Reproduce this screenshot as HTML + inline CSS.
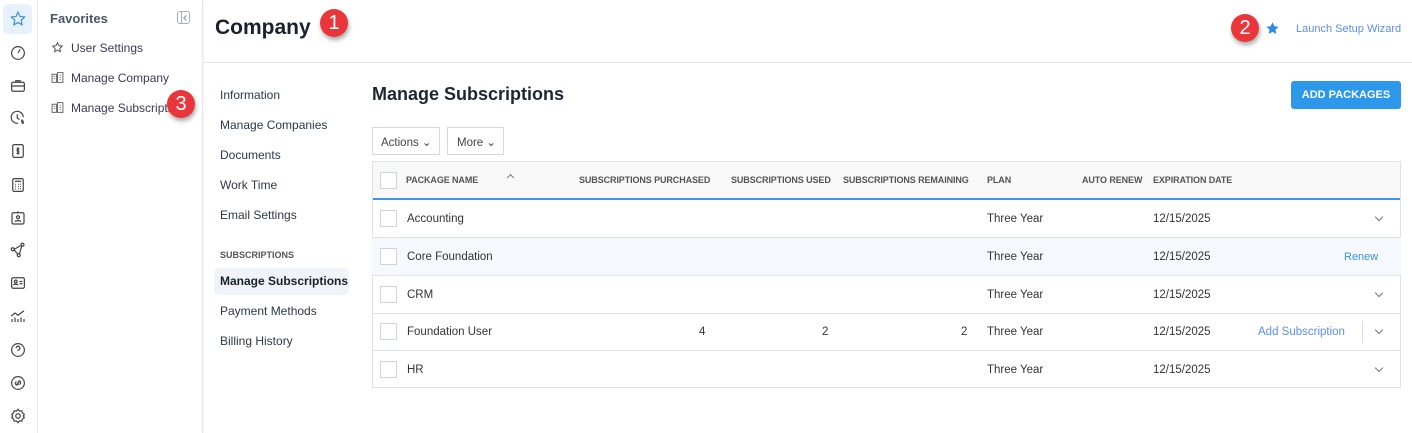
<!DOCTYPE html>
<html><head><meta charset="utf-8"><style>
*{box-sizing:border-box;margin:0;padding:0}
body{width:1412px;height:433px;overflow:hidden;background:#fff;font-family:"Liberation Sans",sans-serif;color:#2d3748;position:relative;font-size:12px}
.abs{position:absolute}
.rail{left:0;top:0;width:38px;height:433px;border-right:1px solid #e5e8ee;background:#fff}
.ic{position:absolute;left:9px;width:18px;height:18px}
.fav{left:38px;top:0;width:165px;height:433px;border-right:1px solid #e3e6eb;box-shadow:1px 0 3px rgba(0,0,0,.05)}
.badge{position:absolute;width:28px;height:28px;border-radius:50%;background:#e8363b;color:#fff;font-size:20px;text-align:center;line-height:28px;box-shadow:1px 3px 5px rgba(0,0,0,.35)}
.nav{position:absolute;left:220px;font-size:12px;color:#2d3748}
.th{position:absolute;top:175px;font-size:9px;font-weight:bold;color:#555;letter-spacing:-.1px}
.cb{position:absolute;left:380px;width:17px;height:17px;border:1px solid #cfd4da;background:#fff}
.row{position:absolute;left:372px;width:1029px;height:38px;border-bottom:1px solid #dfe2e6;font-size:11.5px;color:#333}
.row span{position:absolute;top:13px}
.chev{position:absolute;left:1004px;top:14px;width:6px;height:6px;border-right:1px solid #777;border-bottom:1px solid #777;transform:rotate(45deg)}
</style></head><body>
<div class="abs rail">
 <div class="abs" style="left:3px;top:4px;width:29px;height:30px;background:#e6f1fb;border-radius:5px"></div>
 <svg class="ic" style="top:10px" viewBox="0 0 24 24" fill="none" stroke="#3a8fd8" stroke-width="1.6"><path d="M12 3l2.7 5.6 6.1.8-4.5 4.2 1.1 6.1L12 16.8 6.6 19.7l1.1-6.1L3.2 9.4l6.1-.8z"/></svg>
 <svg class="ic" style="top:44px" viewBox="0 0 24 24" fill="none" stroke="#444" stroke-width="1.6"><circle cx="12" cy="12" r="8.5"/><path d="M12 12l3-5M8 9h.1M16 14h.1"/></svg>
 <svg class="ic" style="top:77px" viewBox="0 0 24 24" fill="none" stroke="#444" stroke-width="1.6"><rect x="3.5" y="7" width="17" height="12" rx="2"/><path d="M9 7V5h6v2M3.5 12h17"/></svg>
 <svg class="ic" style="top:109px" viewBox="0 0 24 24" fill="none" stroke="#444" stroke-width="1.6"><path d="M19 11a8 8 0 1 0-7 8"/><path d="M11 7v5l3 2M19 15h-2v2h2v2h-2"/></svg>
 <svg class="ic" style="top:142px" viewBox="0 0 24 24" fill="none" stroke="#444" stroke-width="1.6"><rect x="5" y="3.5" width="14" height="17" rx="2"/><path d="M14 9h-3v3h2v3h-3M12 7v10"/></svg>
 <svg class="ic" style="top:176px" viewBox="0 0 24 24" fill="none" stroke="#444" stroke-width="1.6"><rect x="5" y="3.5" width="14" height="17" rx="2"/><path d="M8 7h8M8 11h1M12 11h1M15 11h1M8 14h1M12 14h1M15 14h1M8 17h1M12 17h1M15 17h1"/></svg>
 <svg class="ic" style="top:209px" viewBox="0 0 24 24" fill="none" stroke="#444" stroke-width="1.6"><rect x="4" y="5" width="16" height="15" rx="2"/><circle cx="12" cy="11" r="2"/><path d="M8 17c1-2 7-2 8 0M12 3v2"/></svg>
 <svg class="ic" style="top:241px" viewBox="0 0 24 24" fill="none" stroke="#444" stroke-width="1.6"><circle cx="5" cy="11" r="2"/><circle cx="18" cy="5" r="2"/><circle cx="13" cy="19" r="2"/><path d="M7 11l9-5M7 12l5 6M17 7l-3 10"/></svg>
 <svg class="ic" style="top:274px" viewBox="0 0 24 24" fill="none" stroke="#444" stroke-width="1.6"><rect x="3.5" y="5" width="17" height="14" rx="2"/><circle cx="9" cy="10" r="1.8"/><path d="M6 15c1-2 5-2 6 0M14 10h4M14 13h4"/></svg>
 <svg class="ic" style="top:307px" viewBox="0 0 24 24" fill="none" stroke="#444" stroke-width="1.6"><path d="M3 12l5-4 4 3 8-6M4 20v-4M8 20v-6M12 20v-4M16 20v-6M20 20v-4"/></svg>
 <svg class="ic" style="top:341px" viewBox="0 0 24 24" fill="none" stroke="#444" stroke-width="1.6"><circle cx="12" cy="12" r="8.5"/><path d="M9.5 9.5a2.5 2.5 0 1 1 3.5 2.3c-.7.4-1 1-1 1.7M12 16.5h.1"/></svg>
 <svg class="ic" style="top:374px" viewBox="0 0 24 24" fill="none" stroke="#444" stroke-width="1.6"><circle cx="12" cy="12" r="8.5"/><path d="M9 15l6-6M10 10l-1 1a2 2 0 0 0 3 3l1-1M14 14l1-1a2 2 0 0 0-3-3"/></svg>
 <svg class="ic" style="top:407px" viewBox="0 0 24 24" fill="none" stroke="#444" stroke-width="1.6"><circle cx="12" cy="12" r="3"/><path d="M12 3l2 2.5 3-.5 1 3 2.5 2-1.5 2 1.5 2-2.5 2-1 3-3-.5-2 2.5-2-2.5-3 .5-1-3L3.5 14 5 12 3.5 10 6 8l1-3 3 .5z"/></svg>
</div>
<div class="abs fav">
 <div class="abs" style="left:12px;top:11px;font-size:13px;font-weight:bold;color:#4a5568">Favorites</div>
 <div class="abs" style="left:139px;top:11px;width:13px;height:13px;border:1px solid #aab;border-radius:3px"><div style="position:absolute;left:3px;top:-1px;width:1px;height:13px;background:#aab"></div><div style="position:absolute;left:6px;top:4px;width:4px;height:4px;border-left:1px solid #889;border-bottom:1px solid #889;transform:rotate(45deg)"></div></div>
 <svg class="abs" style="left:13px;top:41px;width:13px;height:13px" viewBox="0 0 24 24" fill="none" stroke="#555" stroke-width="1.8"><path d="M12 3l2.7 5.6 6.1.8-4.5 4.2 1.1 6.1L12 16.8 6.6 19.7l1.1-6.1L3.2 9.4l6.1-.8z"/></svg>
 <div class="abs" style="left:33px;top:41px;font-size:12px;color:#3a3a55">User Settings</div>
 <svg class="abs" style="left:13px;top:71px;width:13px;height:13px" viewBox="0 0 24 24" fill="none" stroke="#666" stroke-width="1.8"><rect x="2" y="6" width="8" height="15"/><rect x="12" y="3" width="10" height="18"/><path d="M5 10h2M5 14h2M16 8h2M16 12h2M16 16h2"/></svg>
 <div class="abs" style="left:33px;top:71px;font-size:12px;color:#3a3a55">Manage Company</div>
 <svg class="abs" style="left:13px;top:101px;width:13px;height:13px" viewBox="0 0 24 24" fill="none" stroke="#666" stroke-width="1.8"><rect x="2" y="6" width="8" height="15"/><rect x="12" y="3" width="10" height="18"/><path d="M5 10h2M5 14h2M16 8h2M16 12h2M16 16h2"/></svg>
 <div class="abs" style="left:33px;top:101px;font-size:12px;color:#3a3a55;width:125px;overflow:hidden;white-space:nowrap">Manage Subscriptions</div>
</div>
<div class="badge" style="left:167px;top:90px">3</div>
<div class="abs" style="left:215px;top:16px;font-size:21px;font-weight:bold;color:#1a202c">Company</div>
<div class="badge" style="left:320px;top:9px">1</div>
<div class="badge" style="left:1231px;top:14px">2</div>
<svg class="abs" style="left:1265px;top:21px;width:15px;height:15px" viewBox="0 0 24 24" fill="#2b8ee0"><path d="M12 2l3 6.3 6.8.9-5 4.7 1.3 6.8L12 17.4 5.9 20.7l1.3-6.8-5-4.7 6.8-.9z"/></svg>
<div class="abs" style="left:1296px;top:23px;font-size:11px;color:#5a8ee8">Launch Setup Wizard</div>
<div class="abs" style="left:203px;top:62px;width:1209px;height:1px;background:#e2e6ec"></div>
<div class="nav" style="top:88px">Information</div>
<div class="nav" style="top:118px">Manage Companies</div>
<div class="nav" style="top:148px">Documents</div>
<div class="nav" style="top:178px">Work Time</div>
<div class="nav" style="top:208px">Email Settings</div>
<div class="nav" style="top:250px;font-size:9px;font-weight:bold;color:#555">SUBSCRIPTIONS</div>
<div class="abs" style="left:214px;top:268px;width:135px;height:27px;background:#f0f3f7;border-radius:5px"></div>
<div class="nav" style="top:274px;font-weight:bold;color:#1a202c">Manage Subscriptions</div>
<div class="nav" style="top:304px">Payment Methods</div>
<div class="nav" style="top:334px">Billing History</div>
<div class="abs" style="left:372px;top:84px;font-size:18px;font-weight:bold;color:#1f2633">Manage Subscriptions</div>
<div class="abs" style="left:1291px;top:81px;width:110px;height:28px;background:#2d97ea;border-radius:3px;color:#fff;font-size:11px;font-weight:bold;text-align:center;line-height:28px">ADD PACKAGES</div>
<div class="abs" style="left:372px;top:127px;width:68px;height:28px;border:1px solid #d5d9de;font-size:11.5px;color:#444;padding:7px 0 0 8px">Actions &#8964;</div>
<div class="abs" style="left:447px;top:127px;width:57px;height:28px;border:1px solid #d5d9de;font-size:11.5px;color:#444;padding:7px 0 0 9px">More &#8964;</div>
<div class="abs" style="left:372px;top:161px;width:1029px;height:227px;border:1px solid #dfe2e6"></div>
<div class="abs" style="left:373px;top:162px;width:1027px;height:38px;background:#f8f8f8;border-bottom:2px solid #3c95e6"></div>
<div class="cb" style="top:172px"></div>
<div class="th" style="left:406px">PACKAGE NAME</div>
<div class="abs" style="left:508px;top:175px;width:5px;height:5px;border-left:1px solid #777;border-top:1px solid #777;transform:rotate(45deg)"></div>
<div class="th" style="left:579px">SUBSCRIPTIONS PURCHASED</div>
<div class="th" style="left:731px">SUBSCRIPTIONS USED</div>
<div class="th" style="left:843px">SUBSCRIPTIONS REMAINING</div>
<div class="th" style="left:987px">PLAN</div>
<div class="th" style="left:1082px">AUTO RENEW</div>
<div class="th" style="left:1153px">EXPIRATION DATE</div>
<div class="row" style="top:200px"><span style="left:35px">Accounting</span><span style="left:615px">Three Year</span><span style="left:781px">12/15/2025</span><div class="chev"></div></div>
<div class="row" style="top:238px;background:#f5f9fd"><span style="left:35px">Core Foundation</span><span style="left:615px">Three Year</span><span style="left:781px">12/15/2025</span><span style="left:972px;color:#3c8fe0;font-size:11px">Renew</span></div>
<div class="row" style="top:276px"><span style="left:35px">CRM</span><span style="left:615px">Three Year</span><span style="left:781px">12/15/2025</span><div class="chev"></div></div>
<div class="row" style="top:313px"><span style="left:35px">Foundation User</span><span style="left:327px">4</span><span style="left:450px">2</span><span style="left:589px">2</span><span style="left:615px">Three Year</span><span style="left:781px">12/15/2025</span><span style="left:886px;color:#5a8ee8;font-size:11.5px">Add Subscription</span><div style="position:absolute;left:990px;top:8px;width:1px;height:22px;background:#ddd"></div><div class="chev"></div></div>
<div class="row" style="top:351px;border-bottom:none"><span style="left:35px">HR</span><span style="left:615px">Three Year</span><span style="left:781px">12/15/2025</span><div class="chev"></div></div>
<div class="cb" style="top:210px"></div><div class="cb" style="top:248px"></div><div class="cb" style="top:286px"></div><div class="cb" style="top:323px"></div><div class="cb" style="top:361px"></div>
</body></html>
